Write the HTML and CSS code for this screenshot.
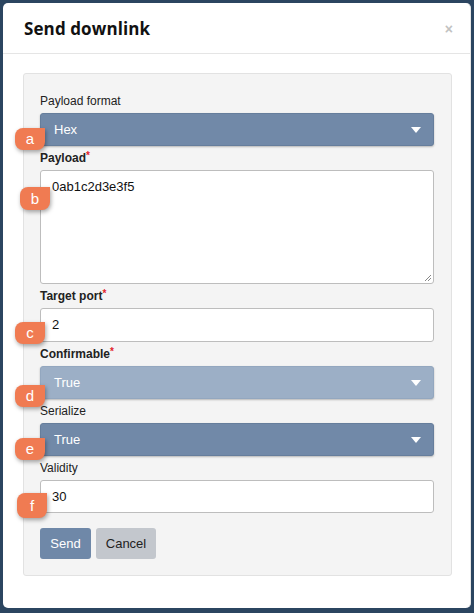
FILE: index.html
```html
<!DOCTYPE html>
<html>
<head>
<meta charset="utf-8">
<link rel="stylesheet" href="styles.css">
</head>
<body>
<div class="modal">
  <div class="modal-header">
    <h2 class="title">Send downlink</h2>
    <span class="close">×</span>
  </div>
  <div class="modal-body">
    <form class="panel">
      <label class="label">Payload format</label>
      <div class="field">
        <div class="select">Hex<span class="caret"></span></div>
        <span class="badge">a</span>
      </div>

      <label class="label bold">Payload<span class="req">*</span></label>
      <div class="field">
        <div class="textarea">0ab1c2d3e3f5<svg class="grip" width="9" height="9" viewBox="0 0 9 9"><path d="M8 2 L2 8 M8 5 L5 8" stroke="#888" stroke-width="1"/></svg></div>
        <span class="badge badge-b">b</span>
      </div>

      <label class="label bold">Target port<span class="req">*</span></label>
      <div class="field">
        <div class="input tall">2</div>
        <span class="badge badge-c">c</span>
      </div>

      <label class="label bold">Confirmable<span class="req">*</span></label>
      <div class="field">
        <div class="select disabled">True<span class="caret"></span></div>
        <span class="badge badge-d">d</span>
      </div>

      <label class="label">Serialize</label>
      <div class="field">
        <div class="select">True<span class="caret"></span></div>
        <span class="badge">e</span>
      </div>

      <label class="label">Validity</label>
      <div class="field">
        <div class="input">30</div>
        <span class="badge badge-f">f</span>
      </div>

      <div class="actions">
        <button type="button" class="btn btn-primary">Send</button>
        <button type="button" class="btn btn-secondary">Cancel</button>
      </div>
    </form>
  </div>
</div>
</body>
</html>
```

FILE: styles.css
```css
* { box-sizing: border-box; }
html, body { margin: 0; padding: 0; }
body {
  width: 474px;
  height: 613px;
  background: #2b4560;
  overflow: hidden;
  font-family: "Liberation Sans", Arial, sans-serif;
  color: #222;
}
.modal {
  margin: 3px 3px 0 3px;
  width: 468px;
  height: 605px;
  background: #fff;
  border-radius: 5px;
  border-right: 1px solid #e6e6e6;
  display: flex;
  flex-direction: column;
}
.modal-header {
  height: 51px;
  border-bottom: 1px solid #e5e5e5;
  display: flex;
  align-items: center;
  justify-content: space-between;
  padding: 0 17px 0 21px;
}
.title {
  margin: 0;
  font-family: "Open Sans", sans-serif;
  font-weight: 700;
  font-size: 17px;
  color: #111;
  letter-spacing: 0.1px;
}
.close {
  color: #c2c2c2;
  font-size: 14px;
  font-weight: 700;
  margin-top: 1px;
}
.modal-body {
  padding: 19px 19px 0 20px;
}
.panel {
  position: relative;
  background: #f4f4f4;
  border: 1px solid #e2e2e2;
  border-radius: 3px;
  width: 429px;
  height: 503px;
  padding: 19px 17px 0 16px;
  display: flex;
  flex-direction: column;
}
.label {
  display: block;
  font-size: 12px;
  line-height: 16px;
  height: 16px;
  margin-bottom: 4px;
  color: #222;
}
.label.bold { font-weight: 700; }
.req { color: #e2222a; font-size: 10px; vertical-align: top; line-height: 12px; }
.field {
  position: relative;
  margin-bottom: 4px;
}
.select {
  position: relative;
  height: 33px;
  background: #7189a8;
  border: 1px solid #667e9c;
  border-radius: 3px;
  box-shadow: 0 1px 2px rgba(0,0,0,0.25);
  color: #fff;
  font-size: 13px;
  line-height: 31px;
  padding-left: 13px;
}
.select.disabled {
  background: #9cafc6;
  border-color: #93a7bf;
}
.caret {
  position: absolute;
  right: 12px;
  top: 13px;
  width: 0;
  height: 0;
  border-left: 5px solid transparent;
  border-right: 5px solid transparent;
  border-top: 6px solid #fff;
}
.textarea, .input {
  background: #fff;
  border: 1px solid #bdbdbd;
  border-radius: 3px;
  font-size: 13px;
  color: #111;
  padding-left: 11px;
}
.textarea {
  position: relative;
  height: 114px;
  padding-top: 8px;
  line-height: 16px;
}
.grip { position: absolute; right: 1px; bottom: 1px; }
.input { height: 33px; line-height: 31px; }
.input.tall { height: 34px; line-height: 32px; }
.field-gap { margin-bottom: 5px; }
.badge {
  position: absolute;
  left: -25px;
  top: 15px;
  width: 30px;
  height: 22px;
  background: #f07b52;
  color: #fff;
  font-size: 15px;
  line-height: 22px;
  text-align: center;
  border-radius: 8px 0 8px 8px;
  box-shadow: 1px 2px 4px rgba(0,0,0,0.35);
}
.badge-b { left: -20px; top: 17px; height: 23px; line-height: 23px; }
.badge-c { top: 14px; }
.badge-d { top: 19px; }
.badge-f { left: -23px; top: 13px; height: 25px; line-height: 25px; }
.actions {
  display: flex;
  gap: 5px;
  margin-top: 11px;
}
.btn {
  height: 31px;
  border: none;
  border-radius: 3px;
  font-family: "Liberation Sans", Arial, sans-serif;
  font-size: 13px;
  padding: 0;
}
.btn-primary {
  width: 51px;
  background: #6f88a8;
  color: #fff;
}
.btn-secondary {
  width: 60px;
  background: #c3c7cd;
  color: #222;
}
```
